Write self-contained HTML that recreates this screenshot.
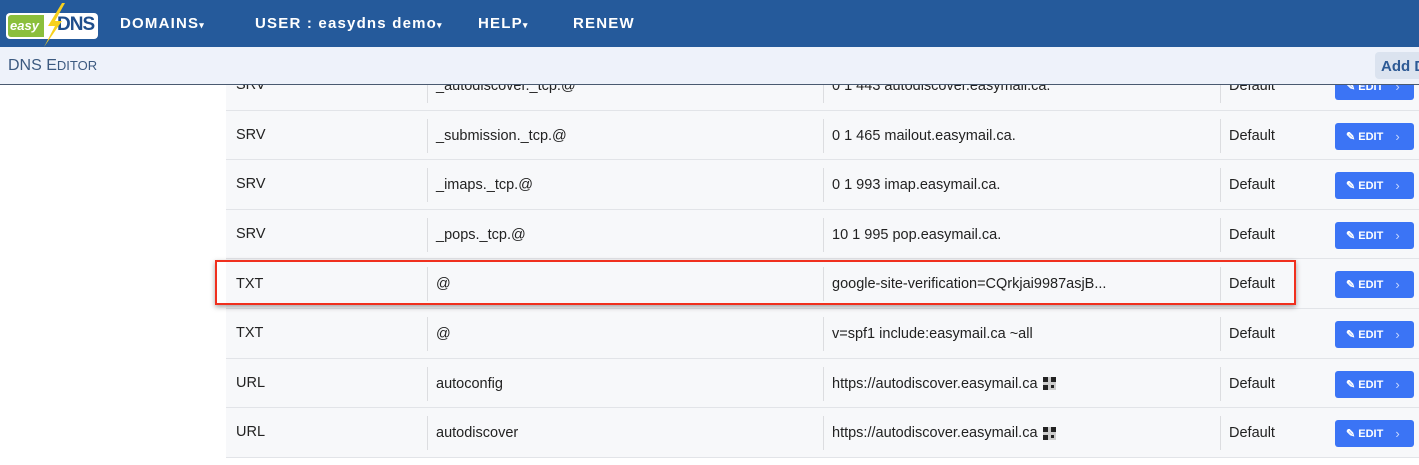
<!DOCTYPE html>
<html><head><style>
*{margin:0;padding:0;box-sizing:border-box}
body{width:1419px;height:465px;overflow:hidden;background:#fff;font-family:"Liberation Sans",Arial,sans-serif;position:relative}
.tbl{position:absolute;left:226px;top:61px;width:1193px}
.row{height:49.6px;background:#f7f8fa;border-bottom:1.5px solid #e2e4e8;position:relative;font-size:14.5px;color:#222}
.row div{position:absolute;top:0;height:100%;display:flex;align-items:center}
.c1{left:10px}.c2{left:201px;border-left:1px solid #dcdde0;padding-left:8px;top:8px!important;height:34px!important}
.c3{left:597px;border-left:1px solid #dcdde0;padding-left:8px;top:8px!important;height:34px!important}
.c4{left:994px;border-left:1px solid #dcdde0;padding-left:8px;top:8px!important;height:34px!important}
.btn{left:1109px;top:12px!important;height:27px!important;width:79px;background:#3b74f5;border-radius:3px;color:#fff;font-size:11px;font-weight:bold;padding-left:11px}
.btn span{margin-left:12px;font-weight:normal;color:#c8d8ff;font-size:13px}
.hdr{position:absolute;left:0;top:0;width:1419px;height:47px;background:#255a9b;z-index:2}
.nav{position:absolute;top:15px;color:#fff;font-weight:bold;font-size:15px;letter-spacing:1.2px}
.nav small{font-size:9px}
.sub{position:absolute;left:0;top:47px;width:1419px;height:38px;background:#eef2fa;border-bottom:1.5px solid #4a5a70;z-index:2}
.qr{display:inline-block;width:13px;height:13px;margin-left:5px;background:
linear-gradient(#222,#222) 0 0/5px 5px no-repeat,linear-gradient(#222,#222) 8px 0/5px 5px no-repeat,linear-gradient(#222,#222) 0 8px/5px 5px no-repeat,linear-gradient(#222,#222) 8px 8px/3px 3px no-repeat,#ccc}
</style></head><body>
<div class="hdr">
<div style="position:absolute;left:6px;top:13px;width:92px;height:26px;background:#fff;border-radius:4px"></div>
<div style="position:absolute;left:8px;top:15px;width:36px;height:22px;background:#8bbf3c;border-radius:3px 0 0 3px;color:#fff;font-style:italic;font-weight:bold;font-size:13px;padding:3px 0 0 2px">easy</div>
<div style="position:absolute;left:57px;top:14px;color:#1f4e8c;font-weight:bold;font-size:19px;letter-spacing:-1px">DNS</div>
<svg style="position:absolute;left:40px;top:2px" width="26" height="46"><path d="M22 1 L8 24 L15 24 L4 45 L22 19 L15 19 L25 1Z" fill="#f7d11e"/></svg>
<div class="nav" style="left:120px">DOMAINS<small>▾</small></div>
<div class="nav" style="left:255px">USER : easydns demo<small>▾</small></div>
<div class="nav" style="left:478px">HELP<small>▾</small></div>
<div class="nav" style="left:573px">RENEW</div>
</div>
<div class="sub"><div style="position:absolute;left:8px;top:10px;color:#3c5a80;font-size:16px">DNS E<span style="font-size:13px">DITOR</span></div>
<div style="position:absolute;left:1375px;top:5px;width:60px;height:27px;background:#dbe3ef;border-radius:4px;color:#2d5a95;font-weight:bold;font-size:15px;padding:6px 0 0 6px">Add D</div></div>
<div class="tbl">
<div class="row"><div class="c1">SRV</div><div class="c2">_autodiscover._tcp.@</div><div class="c3">0 1 443 autodiscover.easymail.ca.</div><div class="c4">Default</div><div class="btn">✎ EDIT<span>›</span></div></div>
<div class="row"><div class="c1">SRV</div><div class="c2">_submission._tcp.@</div><div class="c3">0 1 465 mailout.easymail.ca.</div><div class="c4">Default</div><div class="btn">✎ EDIT<span>›</span></div></div>
<div class="row"><div class="c1">SRV</div><div class="c2">_imaps._tcp.@</div><div class="c3">0 1 993 imap.easymail.ca.</div><div class="c4">Default</div><div class="btn">✎ EDIT<span>›</span></div></div>
<div class="row"><div class="c1">SRV</div><div class="c2">_pops._tcp.@</div><div class="c3">10 1 995 pop.easymail.ca.</div><div class="c4">Default</div><div class="btn">✎ EDIT<span>›</span></div></div>
<div class="row"><div class="c1">TXT</div><div class="c2">@</div><div class="c3">google-site-verification=CQrkjai9987asjB...</div><div class="c4">Default</div><div class="btn">✎ EDIT<span>›</span></div></div>
<div class="row"><div class="c1">TXT</div><div class="c2">@</div><div class="c3">v=spf1 include:easymail.ca ~all</div><div class="c4">Default</div><div class="btn">✎ EDIT<span>›</span></div></div>
<div class="row"><div class="c1">URL</div><div class="c2">autoconfig</div><div class="c3">https://autodiscover.easymail.ca<i class="qr"></i></div><div class="c4">Default</div><div class="btn">✎ EDIT<span>›</span></div></div>
<div class="row"><div class="c1">URL</div><div class="c2">autodiscover</div><div class="c3">https://autodiscover.easymail.ca<i class="qr"></i></div><div class="c4">Default</div><div class="btn">✎ EDIT<span>›</span></div></div>
</div>
<div style="position:absolute;left:215px;top:260px;width:1081px;height:45px;border:2.5px solid #f0301e;box-shadow:0 2px 5px rgba(0,0,0,.35)"></div>
</body></html>
